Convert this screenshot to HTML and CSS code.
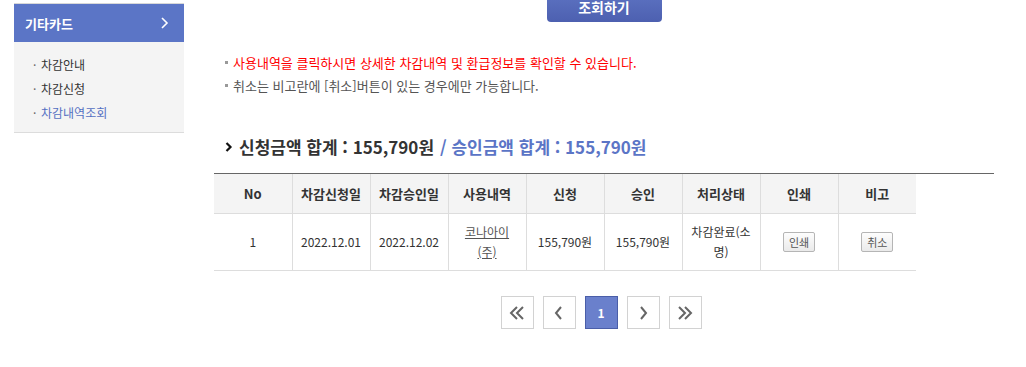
FILE: index.html
```html
<!DOCTYPE html>
<html lang="ko">
<head>
  <meta charset="UTF-8">
  <title>차감내역조회</title>
  <link rel="stylesheet" href="styles.css">
</head>
<body>
  <div class="page">
    <div class="side">
      <div class="side-head">
        <span>기타카드</span>
        <svg width="8" height="12" viewBox="0 0 8 12"><path d="M1 1l5 5-5 5" fill="none" stroke="#fff" stroke-width="1.6"/></svg>
      </div>
      <ul class="side-menu">
        <li>차감안내</li>
        <li>차감신청</li>
        <li class="on">차감내역조회</li>
      </ul>
    </div>

    <div class="content">
      <div class="search-row">
        <button type="button" class="btn-search">조회하기</button>
      </div>

      <ul class="notes">
        <li class="red">사용내역을 클릭하시면 상세한 차감내역 및 환급정보를 확인할 수 있습니다.</li>
        <li>취소는 비고란에 [취소]버튼이 있는 경우에만 가능합니다.</li>
      </ul>

      <h3 class="total">
        <svg width="8" height="10" viewBox="0 0 8 10"><path d="M1.5 1l4 4-4 4" fill="none" stroke="#111" stroke-width="2.2"/></svg>
        <span>신청금액 합계 : 155,790원</span>
        <em>/ 승인금액 합계 : 155,790원</em>
      </h3>

      <div class="table-wrap">
        <table class="list">
          <thead>
            <tr>
              <th>No</th>
              <th>차감신청일</th>
              <th>차감승인일</th>
              <th>사용내역</th>
              <th>신청</th>
              <th>승인</th>
              <th>처리상태</th>
              <th>인쇄</th>
              <th>비고</th>
            </tr>
          </thead>
          <tbody>
            <tr>
              <td>1</td>
              <td>2022.12.01</td>
              <td>2022.12.02</td>
              <td><a href="#" class="link">코나아이<br>(주)</a></td>
              <td>155,790원</td>
              <td>155,790원</td>
              <td>차감완료(소<br>명)</td>
              <td><button type="button" class="btn-small">인쇄</button></td>
              <td><button type="button" class="btn-small">취소</button></td>
            </tr>
          </tbody>
        </table>
      </div>

      <div class="paging">
        <a href="#" class="pg">
          <svg width="16" height="14" viewBox="0 0 16 14"><path d="M8 1L2 7l6 6M14 1L8 7l6 6" fill="none" stroke="#666" stroke-width="2"/></svg>
        </a>
        <a href="#" class="pg">
          <svg width="10" height="14" viewBox="0 0 10 14"><path d="M7 1L2 7l5 6" fill="none" stroke="#666" stroke-width="2"/></svg>
        </a>
        <a href="#" class="pg on">1</a>
        <a href="#" class="pg">
          <svg width="10" height="14" viewBox="0 0 10 14"><path d="M3 1l5 6-5 6" fill="none" stroke="#666" stroke-width="2"/></svg>
        </a>
        <a href="#" class="pg">
          <svg width="16" height="14" viewBox="0 0 16 14"><path d="M2 1l6 6-6 6M8 1l6 6-6 6" fill="none" stroke="#666" stroke-width="2"/></svg>
        </a>
      </div>
    </div>
  </div>
</body>
</html>
```

FILE: styles.css
```css
body {
  margin: 0;
  padding: 0;
  font-family: "Noto Sans CJK KR", "Noto Sans", sans-serif;
  font-size: 12px;
  color: #333;
  background: #fff;
}

ul {
  list-style: none;
  margin: 0;
  padding: 0;
}

.page {
  display: flex;
  align-items: flex-start;
  padding-left: 14px;
  gap: 30px;
}

/* left menu */
.side {
  width: 170px;
  margin-top: 3px;
  border-top: 1px solid #d8d8d8;
  border-bottom: 1px solid #dcdcdc;
  background: #f4f4f4;
}

.side-head {
  display: flex;
  justify-content: space-between;
  align-items: center;
  height: 38px;
  padding: 0 15px 0 11px;
  background: #5b75c6;
  color: #fff;
  font-size: 13px;
  font-weight: bold;
}

.side-menu {
  padding: 11px 0 7px;
}

.side-menu li {
  position: relative;
  padding-left: 27px;
  line-height: 24px;
  color: #333;
}

.side-menu li::before {
  content: "·";
  position: absolute;
  left: 19px;
  color: #666;
}

.side-menu li.on {
  color: #5570c2;
}

/* content */
.content {
  width: 780px;
}

.search-row {
  display: flex;
  justify-content: center;
  margin-top: -14px;
}

.btn-search {
  width: 115px;
  height: 36px;
  border: 0;
  border-radius: 4px;
  background: linear-gradient(#6077c6, #4d60b0);
  color: #fff;
  font-family: inherit;
  font-size: 14px;
  font-weight: bold;
  padding: 6px 0 0;
}

.notes {
  margin-top: 29px;
  padding-left: 11px;
}

.notes li {
  position: relative;
  padding-left: 8px;
  line-height: 23px;
  font-size: 13px;
  color: #555;
}

.notes li::before {
  content: "";
  position: absolute;
  left: 0;
  top: 10px;
  width: 3px;
  height: 3px;
  background: #999;
}

.notes li.red {
  color: #f00;
}

.total {
  display: flex;
  align-items: center;
  gap: 6px;
  margin: 38px 0 0 11px;
  font-size: 17px;
  line-height: 24px;
  font-weight: bold;
  color: #333;
}

.total em {
  font-style: normal;
  color: #5b75c6;
}

.table-wrap {
  margin-top: 14px;
  border-top: 1px solid #666;
}

.list {
  width: 702px;
  border-collapse: collapse;
  table-layout: fixed;
}

.list th,
.list td {
  border-left: 1px solid #ddd;
  border-bottom: 1px solid #ddd;
  text-align: center;
  padding: 0;
}

.list th:first-child,
.list td:first-child {
  border-left: 0;
}

.list th {
  height: 39px;
  background: #f4f4f4;
  font-size: 13px;
  font-weight: bold;
  color: #333;
}

.list td {
  height: 56px;
  line-height: 20px;
  color: #333;
}

.link {
  color: #555;
  text-decoration: underline;
}

.btn-small {
  height: 20px;
  padding: 0 5px;
  border: 1px solid #b5b5b5;
  border-radius: 2px;
  background: linear-gradient(#fdfdfd, #eaeaea);
  color: #555;
  font-family: inherit;
  font-size: 11px;
  line-height: 18px;
}

/* paging */
.paging {
  display: flex;
  justify-content: center;
  gap: 9px;
  margin-top: 25px;
  padding-right: 6px;
}

.pg {
  display: flex;
  justify-content: center;
  align-items: center;
  width: 31px;
  height: 31px;
  border: 1px solid #d2d2d2;
  background: #fff;
  color: #666;
  text-decoration: none;
}

.pg.on {
  background: #6a80cc;
  border-color: #4a5ea8;
  color: #fff;
  font-weight: bold;
}
```
